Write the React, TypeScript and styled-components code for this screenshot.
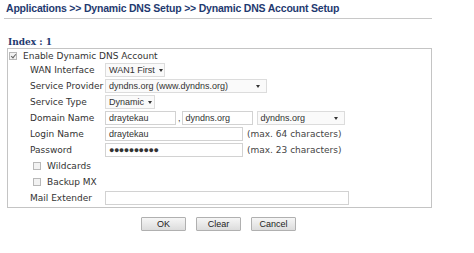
import React from 'react';
import styled, { createGlobalStyle } from 'styled-components';

const GlobalStyle = createGlobalStyle`
	html, body {
		margin: 0;
		padding: 0;
		background: #ffffff;
	}
	body {
		width: 474px;
		height: 253px;
		overflow: hidden;
	}
`;

const Page = styled.div`
	padding: 2px 0 0 4px;
	width: 428px;
	font-family: "DejaVu Sans", Verdana, sans-serif;
	font-size: 9px;
	color: #333;
`;

const Title = styled.h1`
	margin: 0;
	padding: 0 0 4px 2px;
	font-family: "Liberation Sans", Arial, sans-serif;
	font-size: 10.5px;
	font-weight: bold;
	color: #1f3a70;
	border-bottom: 1px solid #c8c8c8;
	letter-spacing: -0.2px;
`;

const Index = styled.div`
	margin: 18px 0 1px 4px;
	font-family: "DejaVu Serif", Georgia, serif;
	font-weight: bold;
	font-size: 9px;
	color: #1f3a70;
`;

const Box = styled.div`
	margin-left: 3px;
	border: 1px solid #c4c4c4;
	padding: 1px 0 1px 0;
`;

const EnableRow = styled.label`
	display: flex;
	align-items: center;
	gap: 6px;
	padding-left: 1px;
	height: 12px;
`;

const Check = styled.span<{ $checked?: boolean }>`
	display: inline-block;
	box-sizing: border-box;
	width: 8px;
	height: 8px;
	border: 1px solid #b8b8b8;
	background: #f2f2f2;
	position: relative;
	&::after {
		content: '';
		display: ${p => (p.$checked ? 'block' : 'none')};
		position: absolute;
		left: 2px;
		top: 0px;
		width: 2px;
		height: 4px;
		border-right: 1px solid #666;
		border-bottom: 1px solid #666;
		transform: rotate(40deg);
	}
`;

const Grid = styled.div`
	display: grid;
	grid-template-columns: 75px 1fr;
	grid-auto-rows: 16px;
	align-items: center;
	padding-left: 22px;
`;

const Label = styled.span`
	white-space: nowrap;
`;

const CheckLabel = styled.label`
	grid-column: 1 / span 2;
	display: flex;
	align-items: center;
	gap: 6px;
	padding-left: 3px;
`;

const Controls = styled.div`
	display: flex;
	align-items: center;
	gap: 4px;
`;

const Field = styled.div<{ $w: number }>`
	box-sizing: border-box;
	width: ${p => p.$w}px;
	height: 14px;
	border: 1px solid #d2d2d2;
	padding: 0 3px;
	display: flex;
	align-items: center;
	justify-content: space-between;
	font-family: "Liberation Sans", Arial, sans-serif;
	font-size: 9px;
	color: #333;
	background: #fff;
	white-space: nowrap;
	overflow: hidden;
`;

const Select = styled(Field)`
	background: #fafafa;
	border-color: #dcdcdc;
	&::after {
		content: '';
		flex: none;
		border-left: 2px solid transparent;
		border-right: 2px solid transparent;
		border-top: 3px solid #333;
		margin: 0 3px 0 4px;
	}
`;

const Dots = styled.span`
	font-size: 9px;
	letter-spacing: -0.5px;
	font-weight: bold;
`;

const Hint = styled.span`
	color: #444;
`;

const Sep = styled.span`
	margin: 0 -3px 0 -2px;
	font-family: "Liberation Sans", Arial, sans-serif;
`;

const Buttons = styled.div`
	display: flex;
	gap: 10px;
	padding: 9px 0 0 137px;
`;

const Button = styled.button`
	box-sizing: border-box;
	width: 45px;
	height: 14px;
	padding: 0;
	border: 1px solid #b0b0b0;
	border-radius: 1px;
	background: linear-gradient(#f6f6f6, #dcdcdc);
	font-family: "Liberation Sans", Arial, sans-serif;
	font-size: 9px;
	color: #222;
`;

export default function App() {
	return (
		<>
			<GlobalStyle />
			<Page>
				<Title>Applications &gt;&gt; Dynamic DNS Setup &gt;&gt; Dynamic DNS Account Setup</Title>
				<Index>Index : 1</Index>
				<Box>
					<EnableRow>
						<Check $checked />
						Enable Dynamic DNS Account
					</EnableRow>
					<Grid>
						<Label>WAN Interface</Label>
						<Controls>
							<Select $w={60}>WAN1 First</Select>
						</Controls>
						<Label>Service Provider</Label>
						<Controls>
							<Select $w={162}>dyndns.org (www.dyndns.org)</Select>
						</Controls>
						<Label>Service Type</Label>
						<Controls>
							<Select $w={50}>Dynamic</Select>
						</Controls>
						<Label>Domain Name</Label>
						<Controls>
							<Field $w={71}>draytekau</Field>
							<Sep>,</Sep>
							<Field $w={71}>dyndns.org</Field>
							<Select $w={88}>dyndns.org</Select>
						</Controls>
						<Label>Login Name</Label>
						<Controls>
							<Field $w={138}>draytekau</Field>
							<Hint>(max. 64 characters)</Hint>
						</Controls>
						<Label>Password</Label>
						<Controls>
							<Field $w={138}><Dots>●●●●●●●●●●</Dots></Field>
							<Hint>(max. 23 characters)</Hint>
						</Controls>
						<CheckLabel>
							<Check />
							Wildcards
						</CheckLabel>
						<CheckLabel>
							<Check />
							Backup MX
						</CheckLabel>
						<Label>Mail Extender</Label>
						<Controls>
							<Field $w={244} />
						</Controls>
					</Grid>
				</Box>
				<Buttons>
					<Button>OK</Button>
					<Button>Clear</Button>
					<Button>Cancel</Button>
				</Buttons>
			</Page>
		</>
	);
}
